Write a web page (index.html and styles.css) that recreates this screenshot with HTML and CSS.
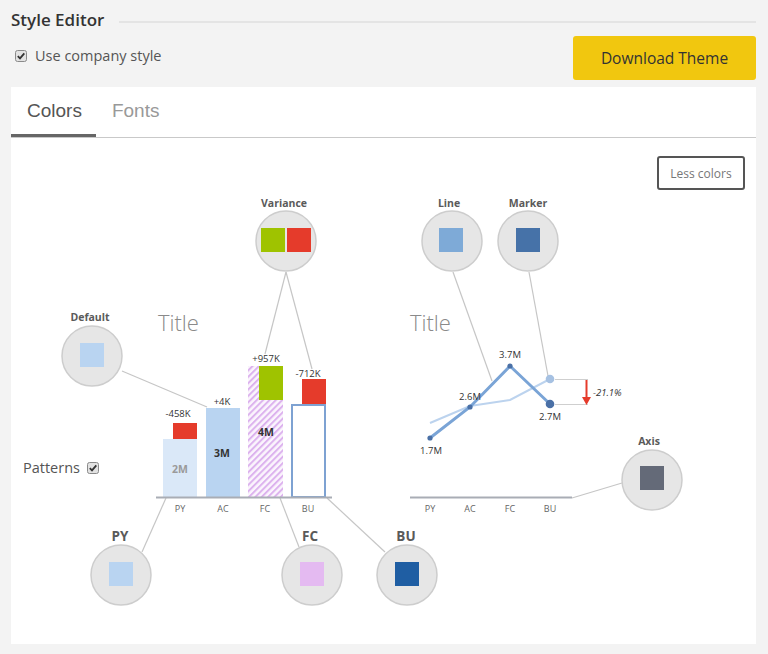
FILE: index.html
```html
<!DOCTYPE html>
<html>
<head>
<meta charset="utf-8">
<link rel="stylesheet" href="styles.css">
</head>
<body>
<div class="page">
  <header class="head">
    <h1 class="heading">Style Editor</h1>
    <div class="rule"></div>
  </header>
  <div class="toolbar">
    <label class="check company">
      <span class="box"><svg viewBox="0 0 12 12" width="12" height="12"><rect x="0.5" y="0.5" width="11" height="11" rx="2" fill="#e2e2e2" stroke="#8a8a8a"/><path d="M2.8 6.2 L5 8.4 L9.3 3.4" fill="none" stroke="#333" stroke-width="1.8"/></svg></span>
      Use company style
    </label>
    <button class="download">Download Theme</button>
  </div>
  <section class="panel">
    <nav class="tabs">
      <div class="tab active">Colors</div>
      <div class="tab">Fonts</div>
    </nav>
    <div class="canvas">
      <svg class="diagram" viewBox="11 138 745 506" width="745" height="506" xmlns="http://www.w3.org/2000/svg">
        <defs>
          <pattern id="hatch" width="4.5" height="4.5" patternUnits="userSpaceOnUse" patternTransform="rotate(45)">
            <rect x="0" y="0" width="4.5" height="4.5" fill="#fbf5fd"/>
            <rect x="0" y="0" width="2" height="4.5" fill="#dcb2ee"/>
          </pattern>
        </defs>

        <!-- connectors -->
        <g class="conn">
          <line x1="122" y1="371" x2="207" y2="407"/>
          <line x1="286" y1="272" x2="265" y2="354"/>
          <line x1="286" y1="272" x2="312" y2="369"/>
          <line x1="166" y1="498" x2="142" y2="552"/>
          <line x1="280" y1="498" x2="299" y2="547"/>
          <line x1="327" y1="498" x2="385" y2="552"/>
          <line x1="453" y1="272" x2="492" y2="381"/>
          <line x1="529" y1="272" x2="548" y2="376"/>
          <line x1="572" y1="498" x2="622" y2="483"/>
        </g>

        <!-- left chart -->
        <text class="ctitle" x="158" y="331">Title</text>
        <rect x="163" y="439" width="34" height="58" fill="#dae8f8"/>
        <rect x="173" y="423" width="24" height="16" fill="#e53b2b"/>
        <rect x="206" y="408" width="34" height="89" fill="#b9d4f1"/>
        <rect x="248" y="366" width="35" height="131" fill="url(#hatch)"/>
        <rect x="259" y="366" width="24" height="34" fill="#9fc300"/>
        <rect x="292" y="405" width="33" height="92" fill="#fff" stroke="#7ea2d2" stroke-width="2"/>
        <rect x="302" y="379" width="24" height="25" fill="#e53b2b"/>
        <line x1="156" y1="497.5" x2="332" y2="497.5" stroke="#a9adb5" stroke-width="2"/>
        <g class="val">
          <text x="178" y="417">-458K</text>
          <text x="222" y="405">+4K</text>
          <text x="266" y="362">+957K</text>
          <text x="308" y="377">-712K</text>
        </g>
        <g class="inbar">
          <text class="faint" x="180" y="473">2M</text>
          <text x="222" y="457">3M</text>
          <text x="266" y="436">4M</text>
        </g>
        <g class="cat">
          <text x="180" y="512">PY</text>
          <text x="223" y="512">AC</text>
          <text x="265" y="512">FC</text>
          <text x="308" y="512">BU</text>
        </g>

        <!-- right chart -->
        <text class="ctitle" x="410" y="331">Title</text>
        <line x1="555" y1="379.5" x2="588" y2="379.5" stroke="#cfcfcf" stroke-width="1"/>
        <line x1="555" y1="404.5" x2="588" y2="404.5" stroke="#cfcfcf" stroke-width="1"/>
        <polyline points="430,423 470,406 510,400 550,379" fill="none" stroke="#bcd3ee" stroke-width="2"/>
        <polyline points="430,438 470,407 510,366 550,404" fill="none" stroke="#7aa4d6" stroke-width="3"/>
        <circle cx="430" cy="438" r="2.6" fill="#4a70a6"/>
        <circle cx="470" cy="407" r="2.6" fill="#4a70a6"/>
        <circle cx="510" cy="366" r="2.6" fill="#4a70a6"/>
        <circle cx="550" cy="379" r="4.3" fill="#a6c1e2"/>
        <circle cx="550" cy="404" r="4.3" fill="#4a70a6"/>
        <line x1="586.5" y1="380" x2="586.5" y2="398" stroke="#e53b2b" stroke-width="2"/>
        <polygon points="582,397 591,397 586.5,405" fill="#e53b2b"/>
        <text class="pct" x="593" y="396">-21.1%</text>
        <g class="val">
          <text x="431" y="454">1.7M</text>
          <text x="470" y="400">2.6M</text>
          <text x="510" y="358">3.7M</text>
          <text x="550" y="420">2.7M</text>
        </g>
        <line x1="410" y1="497.5" x2="572" y2="497.5" stroke="#a9adb5" stroke-width="2"/>
        <g class="cat">
          <text x="430" y="512">PY</text>
          <text x="470" y="512">AC</text>
          <text x="510" y="512">FC</text>
          <text x="550" y="512">BU</text>
        </g>

        <!-- nodes -->
        <g class="node">
          <text class="nlabel" x="284" y="207">Variance</text>
          <circle cx="286" cy="241" r="30"/>
          <rect x="261" y="228" width="24" height="24" fill="#9fc300"/>
          <rect x="287" y="228" width="24" height="24" fill="#e53b2b"/>
        </g>
        <g class="node">
          <text class="nlabel" x="90" y="321">Default</text>
          <circle cx="92" cy="356" r="30"/>
          <rect x="80" y="343" width="24" height="24" fill="#b9d4f1"/>
        </g>
        <g class="node">
          <text class="nlabel" x="449" y="207">Line</text>
          <circle cx="452" cy="241" r="30"/>
          <rect x="439" y="228" width="24" height="24" fill="#7eaad7"/>
        </g>
        <g class="node">
          <text class="nlabel" x="528" y="207">Marker</text>
          <circle cx="528" cy="241" r="30"/>
          <rect x="516" y="228" width="24" height="24" fill="#4672a8"/>
        </g>
        <g class="node">
          <text class="nlabel" x="649" y="445">Axis</text>
          <circle cx="652" cy="480" r="30"/>
          <rect x="640" y="466" width="24" height="24" fill="#646a78"/>
        </g>
        <g class="node">
          <text class="nlabel big" x="120" y="541">PY</text>
          <circle cx="121" cy="575" r="30"/>
          <rect x="109" y="562" width="24" height="24" fill="#b9d4f1"/>
        </g>
        <g class="node">
          <text class="nlabel big" x="310" y="541">FC</text>
          <circle cx="312" cy="575" r="30"/>
          <rect x="300" y="562" width="24" height="24" fill="#e4baf1"/>
        </g>
        <g class="node">
          <text class="nlabel big" x="406" y="541">BU</text>
          <circle cx="407" cy="575" r="30"/>
          <rect x="395" y="562" width="24" height="24" fill="#1f5ea3"/>
        </g>
      </svg>
      <div class="tools">
        <button class="less">Less colors</button>
      </div>
      <label class="check patterns">
        Patterns
        <span class="box"><svg viewBox="0 0 12 12" width="12" height="12"><rect x="0.5" y="0.5" width="11" height="11" rx="2" fill="#e2e2e2" stroke="#8a8a8a"/><path d="M2.8 6.2 L5 8.4 L9.3 3.4" fill="none" stroke="#333" stroke-width="1.8"/></svg></span>
      </label>
    </div>
  </section>
</div>
</body>
</html>
```

FILE: styles.css
```css
html, body {
  margin: 0;
  padding: 0;
}
body {
  background: #f3f3f3;
  font-family: "Open Sans", "Liberation Sans", sans-serif;
  color: #555;
}
.page {
  box-sizing: border-box;
  height: 654px;
  padding: 0 12px 10px 11px;
  display: flex;
  flex-direction: column;
}
.head {
  display: flex;
  align-items: center;
  gap: 15px;
  height: 36px;
  padding-top: 3px;
  box-sizing: border-box;
}
.heading {
  margin: 0;
  font-size: 17px;
  font-weight: 600;
  line-height: 26px;
  color: #333;
  white-space: nowrap;
}
.rule {
  flex: 1;
  height: 2px;
  background: #e4e4e4;
  margin-top: 4px;
}
.toolbar {
  display: flex;
  justify-content: space-between;
  align-items: flex-start;
  height: 44px;
  margin-bottom: 7px;
}
.check {
  display: flex;
  align-items: center;
  gap: 8px;
  font-size: 14.5px;
  line-height: 22px;
  color: #555;
}
.company {
  padding: 9px 0 0 4px;
}
.box {
  display: inline-flex;
  width: 12px;
  height: 12px;
}
.download {
  width: 183px;
  height: 44px;
  border: none;
  border-radius: 3px;
  background: #f1c70f;
  color: #333;
  font-family: "Open Sans", sans-serif;
  font-size: 15.5px;
  padding: 0;
}
.panel {
  flex: 1;
  background: #fff;
  display: flex;
  flex-direction: column;
}
.tabs {
  display: flex;
  height: 51px;
  box-sizing: border-box;
  border-bottom: 1px solid #c9c9c9;
}
.tab {
  box-sizing: border-box;
  height: 50px;
  display: flex;
  align-items: center;
  padding: 0 15px 0 16px;
  font-family: "Liberation Sans", Arial, sans-serif;
  font-size: 19px;
  color: #999;
  border-bottom: 3px solid transparent;
}
.tab.active {
  color: #555;
  border-bottom-color: #666;
  padding-right: 14px;
}
.canvas {
  position: relative;
  flex: 1;
}
.diagram {
  position: absolute;
  left: 0;
  top: 0;
  width: 100%;
  height: 100%;
}
.tools {
  position: relative;
  display: flex;
  justify-content: flex-end;
  padding: 18px 11px 0 0;
}
.less {
  width: 88px;
  height: 34px;
  box-sizing: border-box;
  border: 2px solid #555;
  border-radius: 3px;
  background: #fff;
  color: #777;
  font-family: "Open Sans", sans-serif;
  font-size: 12px;
  padding: 0;
}
.patterns {
  position: absolute;
  left: 12px;
  top: 320px;
  font-size: 14.5px;
  line-height: 20px;
  gap: 7px;
}
.conn line {
  stroke: #c6c6c6;
  stroke-width: 1.2;
}
.ctitle {
  font-family: "Open Sans", sans-serif;
  font-weight: 300;
  font-size: 22px;
  fill: #8a8a8a;
}
.val text, .inbar text, .cat text {
  font-family: "Open Sans", sans-serif;
  text-anchor: middle;
}
.val text {
  font-size: 9.5px;
  fill: #333;
}
.inbar text {
  font-size: 10.5px;
  font-weight: 700;
  fill: #333;
}
.inbar text.faint {
  fill: #9a9a9a;
}
.cat text {
  font-size: 9px;
  fill: #666;
}
.pct {
  font-family: "Open Sans", sans-serif;
  font-size: 9.5px;
  font-style: italic;
  fill: #333;
}
.node circle {
  fill: #e6e6e6;
  stroke: #cdcdcd;
  stroke-width: 1.5;
}
.nlabel {
  font-family: "Open Sans", sans-serif;
  font-size: 10.5px;
  font-weight: 700;
  fill: #5a5a5a;
  text-anchor: middle;
}
.nlabel.big {
  font-size: 13.5px;
}
```
